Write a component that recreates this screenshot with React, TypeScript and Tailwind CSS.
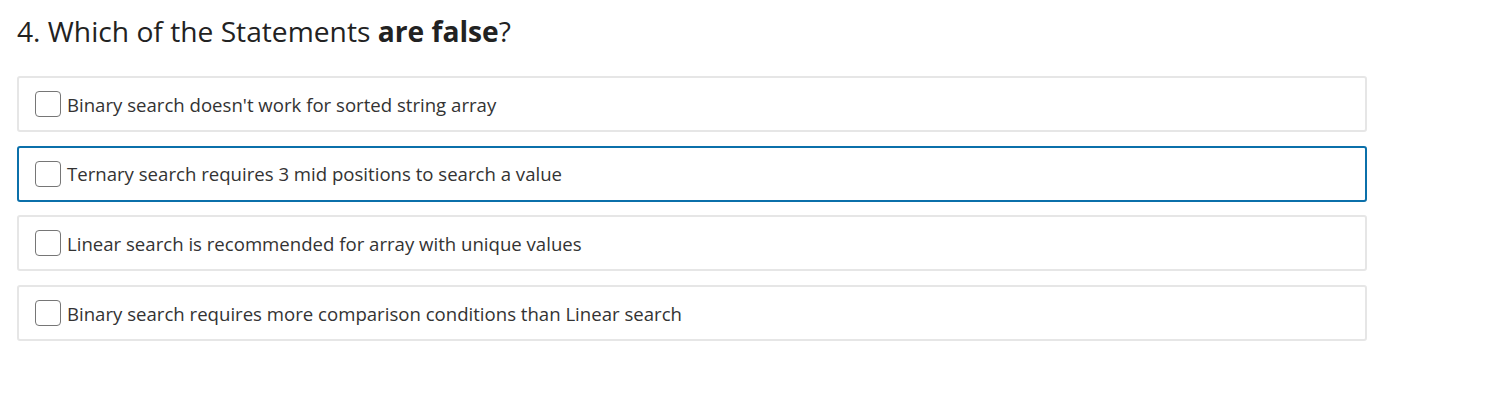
import React from "react";

const options = [
  "Binary search doesn't work for sorted string array",
  "Ternary search requires 3 mid positions to search a value",
  "Linear search is recommended for array with unique values",
  "Binary search requires more comparison conditions than Linear search",
];

export default function App() {
  return (
    <div className="w-[1485px] h-[408px] bg-white text-[#333333]" style={{ fontFamily: '"Open Sans", "Noto Sans", sans-serif' }}>
      <div className="pl-[17px] pt-[12px]">
        <h1 className="text-[28.2px] leading-[38px] font-normal text-[#222]">
          4. Which of the Statements <b className="font-bold">are false</b>?
        </h1>
        <div className="mt-[26px] flex flex-col gap-[13.7px] w-[1350px]">
          {options.map((o, i) => (
            <div
              key={i}
              className={`h-[56px] rounded-[3px] border-2 flex items-center pl-[16px] ${i === 1 ? "border-[#0b70aa]" : "border-[#e6e6e6]"}`}
            >
              <span className="w-[26px] h-[26px] rounded-[4px] border border-[#767676] bg-white shrink-0" />
              <span className="ml-[6px] text-[18.6px] leading-[26px] text-[#333] pt-[1px]">{o}</span>
            </div>
          ))}
        </div>
      </div>
    </div>
  );
}
